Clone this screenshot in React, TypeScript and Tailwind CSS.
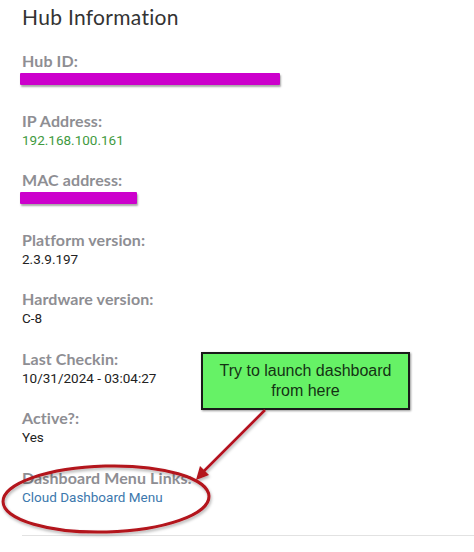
const labelCls = "text-[16px] leading-[20px] font-bold text-[#8e8e93] tracking-[0.1px]";
const valueCls = "text-[13.5px] leading-[18px] text-[#222222]";

const Field = ({ label, children }: { label: string; children: React.ReactNode }) => (
  <div className="flex flex-col h-[59.5px]">
    <div className={labelCls} style={{ fontFamily: "Lato, 'Open Sans', sans-serif" }}>{label}</div>
    <div className="h-[18px]">{children}</div>
  </div>
);

const Redacted = ({ width }: { width: string }) => (
  <div className={`${width} h-[12px] mt-[2px] -ml-[2px] bg-[#cc00cc] shadow-[1px_2px_2px_rgba(0,0,0,0.35)] rounded-[1px]`} />
);

export default function App() {
  return (
    <div className="relative w-[474px] h-[552px] bg-white overflow-hidden" style={{ fontFamily: "Roboto, Arial, sans-serif" }}>
      <div className="pl-[22px] pt-[3px] flex flex-col">
        <h1 className="text-[21px] leading-[28px] text-[#333333] tracking-[0.3px] mb-[20px]" style={{ fontFamily: "Lato, 'Open Sans', sans-serif" }}>
          Hub Information
        </h1>

        <Field label="Hub ID:">
          <Redacted width="w-[260px]" />
        </Field>
        <Field label="IP Address:">
          <div className="text-[13.5px] leading-[18px] text-[#3f9a3f]">192.168.100.161</div>
        </Field>
        <Field label="MAC address:">
          <Redacted width="w-[117px]" />
        </Field>
        <Field label="Platform version:">
          <div className={valueCls}>2.3.9.197</div>
        </Field>
        <Field label="Hardware version:">
          <div className={valueCls}>C-8</div>
        </Field>
        <Field label="Last Checkin:">
          <div className={valueCls}>10/31/2024 - 03:04:27</div>
        </Field>
        <Field label="Active?:">
          <div className={valueCls}>Yes</div>
        </Field>
        <div className="flex flex-col">
          <div className={labelCls} style={{ fontFamily: "Lato, 'Open Sans', sans-serif" }}>Dashboard Menu Links:</div>
          <a className="text-[13.5px] leading-[18px] text-[#3c78ad]">Cloud Dashboard Menu</a>
        </div>
        <div className="mt-[29px] border-t border-[#e2e2e2]" />
      </div>

      {/* callout */}
      <div
        className="absolute left-[201px] top-[352px] w-[209px] h-[58px] bg-[#66f266] border-2 border-[#1a1a1a] shadow-[1px_1px_2px_rgba(0,0,0,0.4)] flex items-center justify-center text-center text-[16px] leading-[20px] text-[#143214]"
        style={{ fontFamily: "'Liberation Sans', Arial, sans-serif" }}
      >
        Try to launch dashboard
        <br />
        from here
      </div>

      <svg className="absolute inset-0 pointer-events-none" width="474" height="552" viewBox="0 0 474 552">
        <defs>
          <filter id="sh" x="-10%" y="-10%" width="120%" height="130%">
            <feDropShadow dx="1" dy="2" stdDeviation="1.5" floodColor="#000" floodOpacity="0.3" />
          </filter>
        </defs>
        <g filter="url(#sh)">
          <ellipse cx="106" cy="499" rx="103" ry="33" fill="none" stroke="#b3121b" strokeWidth="3" transform="rotate(-1.5 106 499)" />
          <line x1="265" y1="410" x2="202" y2="473" stroke="#b3121b" strokeWidth="2.5" />
          <path d="M196 480 L200 466 L209 475 Z" fill="#b3121b" />
        </g>
      </svg>
    </div>
  );
}
